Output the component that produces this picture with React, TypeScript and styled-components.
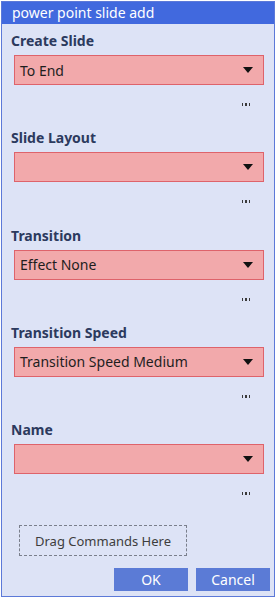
import styled, { createGlobalStyle } from 'styled-components'

const GlobalStyle = createGlobalStyle`
  html, body {
    margin: 0;
    padding: 0;
    background: #ffffff;
  }
  * {
    box-sizing: border-box;
  }
`

const fields = [
  { label: 'Create Slide', value: 'To End' },
  { label: 'Slide Layout', value: '' },
  { label: 'Transition', value: 'Effect None' },
  { label: 'Transition Speed', value: 'Transition Speed Medium' },
  { label: 'Name', value: '' },
]

export default function App() {
  return (
    <>
      <GlobalStyle />
      <Panel>
        <TitleBar>power point slide add</TitleBar>
        <Body>
          {fields.map((f) => (
            <Group key={f.label}>
              <Label>{f.label}</Label>
              <Select>
                <SelectText>{f.value}</SelectText>
                <Arrow />
              </Select>
              <MoreRow>
                <More title="...">
                  <Tick />
                  <Tick />
                  <Tick />
                </More>
              </MoreRow>
            </Group>
          ))}
          <DropZone>Drag Commands Here</DropZone>
          <ButtonRow>
            <Button>OK</Button>
            <Button>Cancel</Button>
          </ButtonRow>
        </Body>
      </Panel>
    </>
  )
}

const Panel = styled.div`
  font-family: 'Noto Sans', 'Open Sans', sans-serif;
  margin: 1px 0 0 1px;
  width: 274px;
  height: 596px;
  border: 1px solid #5c79d8;
  background: #dde3f6;
  display: flex;
  flex-direction: column;
`

const TitleBar = styled.div`
  height: 22px;
  background: #4169de;
  color: #ffffff;
  font-size: 14px;
  line-height: 22px;
  padding-left: 10px;
  white-space: nowrap;
`

const Body = styled.div`
  display: flex;
  flex-direction: column;
  padding: 8px 0 0 9px;
`

const Group = styled.div`
  display: flex;
  flex-direction: column;
  margin-bottom: 11.25px;
`

const Label = styled.div`
  height: 17px;
  font-size: 14px;
  line-height: 17px;
  font-weight: 700;
  color: #2c3a5e;
`

const Select = styled.div`
  margin: 6px 0 0 3px;
  width: 250px;
  height: 30px;
  background: #f2a9ab;
  border: 1px solid #de636b;
  display: flex;
  align-items: center;
  justify-content: space-between;
  padding: 0 10px 0 5px;
`

const SelectText = styled.span`
  font-size: 14px;
  color: #1e1e1e;
  white-space: nowrap;
`

const Arrow = styled.span`
  width: 0;
  height: 0;
  border-left: 5px solid transparent;
  border-right: 5px solid transparent;
  border-top: 6px solid #111111;
`

const MoreRow = styled.div`
  margin-top: 13px;
  height: 20px;
  display: flex;
  justify-content: flex-end;
  align-items: flex-start;
  padding: 5px 24px 0 0;
`

const More = styled.span`
  display: flex;
  gap: 2px;
`

const Tick = styled.span`
  width: 1.5px;
  height: 3px;
  background: #3a3a3a;
`

const DropZone = styled.div`
  margin: 7px 0 0 8px;
  width: 168px;
  height: 31px;
  border: 1px dashed #7a7f8c;
  display: flex;
  align-items: center;
  justify-content: center;
  font-size: 13px;
  color: #3d3d3d;
`

const ButtonRow = styled.div`
  margin-top: 12px;
  display: flex;
  justify-content: flex-end;
  gap: 8px;
  padding-right: 4px;
`

const Button = styled.button`
  width: 74px;
  height: 23px;
  border: none;
  background: #5b7bd6;
  color: #ffffff;
  font-family: 'Noto Sans', 'Open Sans', sans-serif;
  font-size: 14px;
  padding: 0;
`
